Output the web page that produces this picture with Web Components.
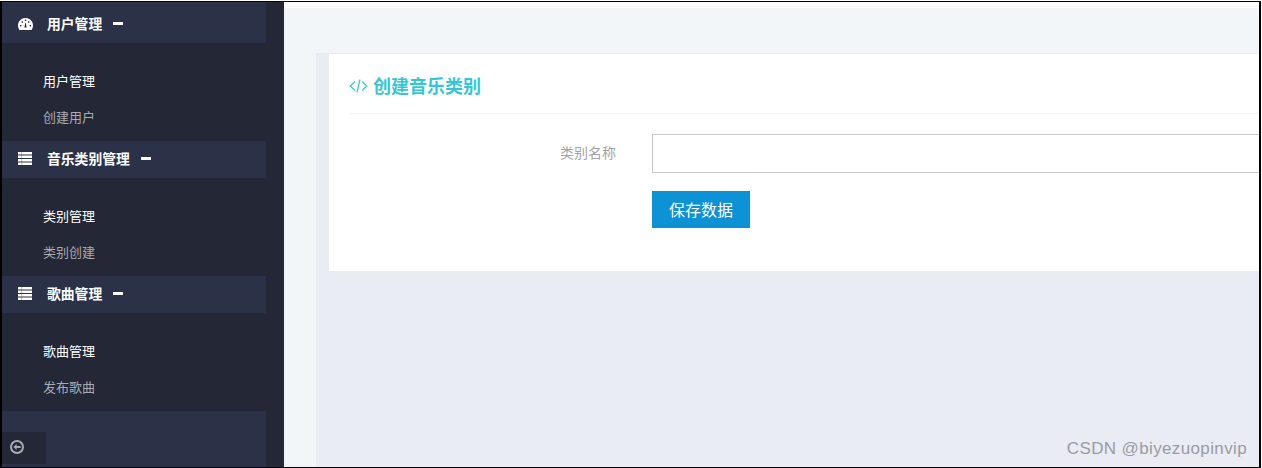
<!DOCTYPE html>
<html lang="zh">
<head>
<meta charset="utf-8">
<title>创建音乐类别</title>
<style>
  html, body { margin: 0; padding: 0; background: #fff; overflow: hidden; }
  body { font-family: "Noto Sans CJK SC", "Liberation Sans", sans-serif; }
</style>
</head>
<body>
<admin-frame>
  <side-nav slot="side">
    <nav-group label="用户管理" icon="gauge" first>
      <nav-item active>用户管理</nav-item>
      <nav-item>创建用户</nav-item>
    </nav-group>
    <nav-group label="音乐类别管理" icon="list">
      <nav-item active>类别管理</nav-item>
      <nav-item>类别创建</nav-item>
    </nav-group>
    <nav-group label="歌曲管理" icon="list">
      <nav-item active>歌曲管理</nav-item>
      <nav-item>发布歌曲</nav-item>
    </nav-group>
  </side-nav>
  <form-card title-text="创建音乐类别">
    <form-row label="类别名称"></form-row>
    <save-button>保存数据</save-button>
  </form-card>
</admin-frame>

<script>
// icons of the side menu
const ICONS = {
  gauge: `<svg width="15" height="12" viewBox="0 0 15 12">
    <path fill="#fff" d="M7.5 0C3.4 0 0 3.3 0 7.5c0 1.6.5 3.1 1.3 4.5h12.4c.8-1.4 1.3-2.9 1.3-4.5C15 3.3 11.6 0 7.5 0z"/>
    <g fill="#232736">
      <rect x="2" y="7" width="1.4" height="1.4"/>
      <rect x="3.6" y="3.4" width="1.4" height="1.4"/>
      <rect x="6.8" y="1.6" width="1.4" height="1.4"/>
      <rect x="10" y="3.4" width="1.4" height="1.4"/>
      <rect x="11.6" y="7" width="1.4" height="1.4"/>
      <path d="M6.4 9.5 7.3 5h.6l.7 4.5z"/>
    </g>
  </svg>`,
  list: `<svg width="14" height="13" viewBox="0 0 14 13">
    <path fill="#fff" d="M0 0h14v2.5H0zM0 3.5h14V6H0zM0 7h14v2.5H0zM0 10.5h14V13H0z"/>
    <path fill="#2b3147" opacity=".55" d="M3.5 0h.6v13h-.6z"/>
  </svg>`
};

class AdminFrame extends HTMLElement {
  constructor() {
    super();
    this.attachShadow({ mode: 'open' });
    this.shadowRoot.innerHTML = `
      <style>
        :host {
          display: flex;
          box-sizing: border-box;
          height: 467px;
          width: 1261px;
          margin-top: 1px;
          border: 1px solid #000;
          border-width: 1px 2px 1px 2px;
          background: #fff;
          overflow: hidden;
          position: relative;
        }
        .main {
          flex: 1;
          min-width: 0;
          display: flex;
          flex-direction: column;
          overflow: hidden;
        }
        .strip { height: 6px; background: #fff; flex: none; }
        .page {
          flex: 1;
          background: #f3f6f9;
          padding: 45px 0 0 32px;
          display: flex;
          min-height: 0;
        }
        .body {
          flex: 1;
          min-width: 0;
          background: #e9ecf3;
          padding-left: 13px;
          overflow: hidden;
        }
        .mark {
          position: absolute;
          right: 12px;
          bottom: 8px;
          font: 17px/20px "Liberation Sans", sans-serif;
          color: #999ca2;
          letter-spacing: 0.37px;
        }
      </style>
      <slot name="side"></slot>
      <div class="main">
        <div class="strip"></div>
        <div class="page">
          <div class="body"><slot></slot></div>
        </div>
      </div>
      <div class="mark">CSDN @biyezuopinvip</div>
    `;
  }
}

class SideNav extends HTMLElement {
  constructor() {
    super();
    this.attachShadow({ mode: 'open' });
    this.shadowRoot.innerHTML = `
      <style>
        :host {
          display: flex;
          flex: none;
          flex-direction: column;
          width: 282px;
          box-sizing: border-box;
          padding-right: 18px;
          background: #232736;
        }
        .foot {
          flex: 1;
          background: #2b3147;
          display: flex;
          align-items: flex-end;
          padding-bottom: 3px;
        }
        .back {
          width: 44px;
          height: 32px;
          background: #232736;
          display: flex;
          align-items: center;
          padding-left: 8px;
          padding-bottom: 2px;
          box-sizing: border-box;
        }
      </style>
      <slot></slot>
      <div class="foot">
        <div class="back">
          <svg width="14" height="14" viewBox="0 0 14 14">
            <circle cx="7" cy="7" r="6" fill="none" stroke="#a9abb2" stroke-width="2"/>
            <path fill="#a9abb2" d="M3.4 7l3.2-3v2H10.6v2H6.6v2z"/>
          </svg>
        </div>
      </div>
    `;
  }
}

class NavGroup extends HTMLElement {
  constructor() {
    super();
    this.attachShadow({ mode: 'open' });
  }

  connectedCallback() {
    let icon = ICONS[this.getAttribute('icon')] || '';
    this.shadowRoot.innerHTML = `
      <style>
        :host { display: block; }
        .head {
          display: flex;
          align-items: center;
          height: 37px;
          padding-left: 16px;
          background: #2b3147;
          color: #fff;
          font-size: 13.8px;
          font-weight: 700;
          line-height: 20px;
        }
        :host([first]) .head { padding-top: 4px; }
        .ico { display: flex; width: 29px; flex: none; margin-top: -2px; }
        .txt { margin-bottom: 4px; }
        .minus { width: 10px; height: 3px; background: #fff; margin-left: 11px; margin-top: -3px; }
        ul { list-style: none; margin: 0; padding: 20px 0 6px; }
      </style>
      <div class="head">
        <span class="ico">${icon}</span>
        <span class="txt">${this.getAttribute('label')}</span>
        <span class="minus"></span>
      </div>
      <ul><slot></slot></ul>
    `;
  }
}

class NavItem extends HTMLElement {
  constructor() {
    super();
    this.attachShadow({ mode: 'open' });
    this.shadowRoot.innerHTML = `
      <style>
        :host {
          display: block;
          box-sizing: border-box;
          height: 36px;
          line-height: 35px;
          padding-left: 41px;
          font-size: 13px;
          color: #a9abb2;
        }
        :host([active]) { color: #fff; }
      </style>
      <slot></slot>
    `;
  }
}

class FormCard extends HTMLElement {
  constructor() {
    super();
    this.attachShadow({ mode: 'open' });
  }

  connectedCallback() {
    this.shadowRoot.innerHTML = `
      <style>
        :host {
          display: block;
          box-sizing: border-box;
          height: 218px;
          background: #fff;
          border-top: 1px solid #e9ecf1;
          padding-left: 20px;
        }
        .title {
          display: flex;
          align-items: center;
          gap: 5px;
          height: 60px;
          padding-top: 4px;
          box-sizing: border-box;
          border-bottom: 1px solid #eef1f5;
          color: #36c6d3;
          font-size: 18px;
          font-weight: 700;
          line-height: 24px;
        }
        .title span { margin-bottom: 2px; }
        .fields {
          display: flex;
          flex-direction: column;
          gap: 18px;
          padding-top: 20px;
        }
      </style>
      <div class="title">
        <svg width="19" height="14" viewBox="0 0 19 14" fill="none" stroke="#36c6d3" stroke-width="1.2">
          <path d="M6 2.5 1.2 7 6 11.5M13 2.5 17.8 7 13 11.5M11 .5 8 13.5"/>
        </svg>
        <span>${this.getAttribute('title-text')}</span>
      </div>
      <div class="fields"><slot></slot></div>
    `;
  }
}

class FormRow extends HTMLElement {
  constructor() {
    super();
    this.attachShadow({ mode: 'open' });
  }

  connectedCallback() {
    this.shadowRoot.innerHTML = `
      <style>
        :host { display: flex; align-items: center; }
        label {
          width: 267px;
          flex: none;
          text-align: right;
          font-size: 14px;
          line-height: 20px;
          color: #a3a3a3;
          margin-bottom: 4px;
        }
        input {
          flex: none;
          margin: 0 0 0 36px;
          width: 700px;
          height: 39px;
          box-sizing: border-box;
          border: 1px solid #c9c9c9;
          outline: none;
          padding: 0 10px;
          background: #fff;
        }
      </style>
      <label for="f">${this.getAttribute('label')}</label>
      <input id="f" type="text">
    `;
  }
}

class SaveButton extends HTMLElement {
  constructor() {
    super();
    this.attachShadow({ mode: 'open' });
    this.shadowRoot.innerHTML = `
      <style>
        :host { display: block; padding-left: 303px; }
        button {
          display: block;
          width: 98px;
          height: 37px;
          padding: 0;
          border: none;
          background: #0d92d6;
          color: #fff;
          font: 16px/37px "Noto Sans CJK SC", sans-serif;
          cursor: pointer;
        }
      </style>
      <button><slot></slot></button>
    `;
  }
}

customElements.define('admin-frame', AdminFrame);
customElements.define('side-nav', SideNav);
customElements.define('nav-group', NavGroup);
customElements.define('nav-item', NavItem);
customElements.define('form-card', FormCard);
customElements.define('form-row', FormRow);
customElements.define('save-button', SaveButton);
</script>
</body>
</html>
